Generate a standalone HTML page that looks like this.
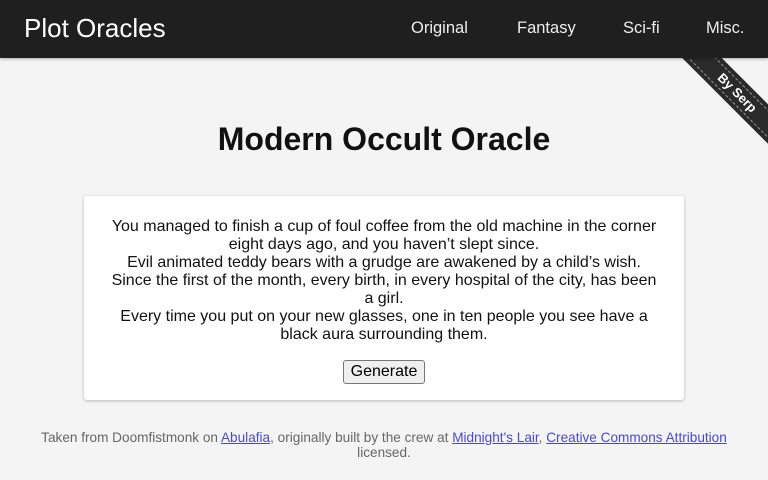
<!DOCTYPE html>
<html><head><style>
body{margin:0;width:768px;height:480px;background:#f4f4f4;font-family:"Liberation Sans",sans-serif;overflow:hidden;position:relative}
.hdr{position:absolute;left:0;top:0;width:768px;height:58px;background:#1f1f1f;box-shadow:0 1px 3px rgba(0,0,0,.3);z-index:1}
.brand{position:absolute;left:24px;top:13px;color:#fff;font-size:26px}
.nav a{position:absolute;top:19px;color:#eee;font-size:16.5px;text-decoration:none}
.rib{position:absolute;left:662px;top:80px;width:150px;height:26px;background:#2a2a2a;transform:rotate(45deg);transform-origin:center;color:#fff;font-size:13px;font-weight:bold;text-align:center;line-height:26px;box-shadow:0 0 0 1px #2a2a2a;outline:1px dashed rgba(255,255,255,.5);outline-offset:-4px}
h1{position:absolute;top:121px;left:0;width:768px;margin:0;text-align:center;font-size:32px;font-weight:bold;color:#111}
.card{position:absolute;left:84px;top:196px;width:600px;height:204px;background:#fff;border-radius:3px;box-shadow:0 1px 3px rgba(0,0,0,.25)}
.txt{position:absolute;left:24px;top:22px;width:552px;text-align:center;font-size:16px;line-height:18px;color:#111}
button{position:absolute;left:259px;top:164px;width:82px;height:24px;font:16px "Liberation Sans",sans-serif;background:#efefef;border:1px solid #777;border-radius:3px;padding:0}
.ft{position:absolute;left:20px;top:430px;width:728px;text-align:center;font-size:13.6px;line-height:15px;color:#666}
.ft a{color:#4a4ad0;text-decoration:underline}
</style></head><body>
<div class="hdr"><div class="brand">Plot Oracles</div>
<div class="nav"><a style="left:411px">Original</a><a style="left:517px">Fantasy</a><a style="left:623px">Sci-fi</a><a style="left:706px">Misc.</a></div></div>
<div class="rib">By Serp</div>
<h1>Modern Occult Oracle</h1>
<div class="card"><div class="txt">You managed to finish a cup of foul coffee from the old machine in the corner eight days ago, and you haven’t slept since.<br>Evil animated teddy bears with a grudge are awakened by a child’s wish.<br>Since the first of the month, every birth, in every hospital of the city, has been a girl.<br>Every time you put on your new glasses, one in ten people you see have a black aura surrounding them.</div>
<button>Generate</button></div>
<div class="ft">Taken from Doomfistmonk on <a>Abulafia</a>, originally built by the crew at <a>Midnight's Lair</a>, <a>Creative Commons Attribution</a> licensed.</div>
</body></html>
